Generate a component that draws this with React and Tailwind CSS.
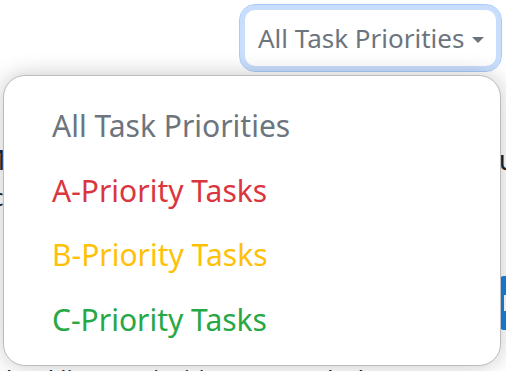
import { useState } from 'react'

const OPTIONS = [
  { label: 'All Task Priorities', color: 'text-[#6c757d]' },
  { label: 'A-Priority Tasks', color: 'text-[#d9363e]' },
  { label: 'B-Priority Tasks', color: 'text-[#ffc107]' },
  { label: 'C-Priority Tasks', color: 'text-[#28a745]' },
]

export default function App() {
  const [open, setOpen] = useState(true)
  const [selected, setSelected] = useState(OPTIONS[0].label)

  return (
    <div className="relative h-[371px] w-[506px] overflow-hidden bg-white font-['Noto_Sans',sans-serif]">
      <div className="flex justify-end pr-[4px] pt-[4px]">
        <button
          type="button"
          onClick={() => setOpen(!open)}
          className="flex h-[68px] w-[263px] items-center rounded-[16px] border border-[#a9cbfb] bg-white pl-[18px] text-[26px] text-[#6c757d] ring-[5px] ring-[#c8defc] ring-inset"
        >
          {selected}
          <span className="ml-[8px] mt-[4px] h-0 w-0 border-x-[6px] border-t-[6px] border-x-transparent border-t-[#6c757d]" />
        </button>
      </div>

      <div className="mt-[72px] flex h-[30px] items-center justify-between text-[28px] text-[#212529]">
        <span className="-ml-[20px]">My tasks</span>
        <span className="-mr-[10px]">Menu</span>
      </div>
      <div className="mt-[8px] -ml-[8px] h-[30px] text-[24px] leading-[30px] text-[#212529]">cards</div>
      <div className="mt-[64px] flex justify-end">
        <div className="-mr-[54px] flex h-[54px] w-[60px] items-center rounded bg-[#1a7fe0] pl-[4px]">
          <span className="h-[16px] w-[3px] bg-white" />
        </div>
      </div>
      <div className="mt-[34px] pl-[6px] text-[24px] leading-[30px] text-[#212529]">lead list to prioritize your tasks here</div>

      {open && (
        <ul className="absolute left-[3px] top-[75px] flex h-[291px] w-[498px] flex-col justify-center rounded-[22px] border border-[#bdbdbd] bg-white pt-[12px] pb-[8px] shadow-[0_0_22px_rgba(0,0,0,0.22)]">
          {OPTIONS.map(option => (
            <li key={option.label}>
              <button
                type="button"
                onClick={() => {
                  setSelected(option.label)
                  setOpen(false)
                }}
                className={`flex h-[64.5px] w-full items-center pl-[48px] text-left text-[30px] ${option.color}`}
              >
                {option.label}
              </button>
            </li>
          ))}
        </ul>
      )}
    </div>
  )
}
